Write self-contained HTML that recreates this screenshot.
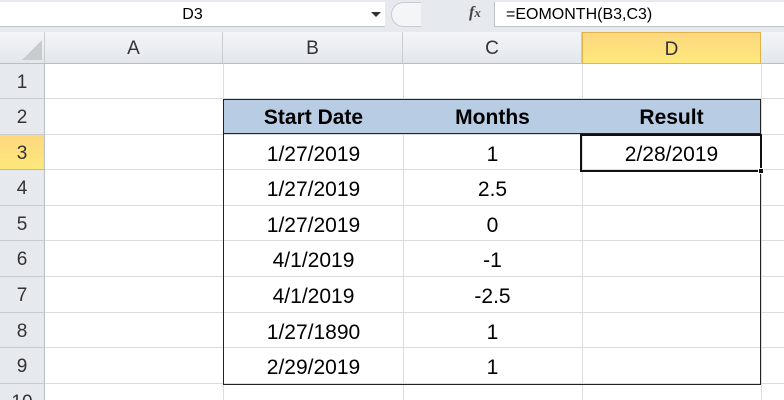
<!DOCTYPE html>
<html><head><style>
html,body{margin:0;width:784px;height:400px;overflow:hidden;background:#fff;font-family:"Liberation Sans",Arial,sans-serif;position:relative}
div{position:absolute;box-sizing:border-box}
.ch{top:32px;height:32px;background:linear-gradient(#f3f5f8,#e3e7ec);border-right:1px solid #c9cdd2;border-bottom:1px solid #b9bec5;font-size:19px;color:#333;text-align:center;line-height:34px}
.rh{left:0;width:45px;background:#e6e9ee;border-bottom:1px solid #c9cdd2;border-right:1px solid #b9bec5;font-size:19px;color:#333;text-align:center}
.hl{left:45px;width:739px;height:1px;background:#dadcdd}
.vl{top:64px;bottom:0;width:1px;background:#dadcdd}
.c{font-size:21px;color:#000;text-align:center}
</style></head><body>
<div style="left:0;top:0;width:784px;height:32px;background:#e6e9ee"></div>
<div style="left:0;top:2px;width:385px;height:25px;background:#fff;border-bottom:1px solid #c0c4c8;font-size:16px;text-align:center;line-height:26px">D3</div>
<div style="left:371px;top:12px;width:0;height:0;border-left:5px solid transparent;border-right:5px solid transparent;border-top:5px solid #333"></div>
<div style="left:391px;top:2px;width:30px;height:25px;border-radius:14px 0 0 14px;border:1px solid #c8ccd0;border-right:none;background:#f4f5f7"></div>
<div style="left:469px;top:4px;font:italic bold 16px 'Liberation Serif',serif;color:#444">f<span style="font-size:13px">x</span></div>
<div style="left:494px;top:2px;width:290px;height:25px;background:#fff;border-left:1px solid #c0c4c8;border-bottom:1px solid #c0c4c8;font-size:16px;line-height:26px;padding-left:11px">=EOMONTH(B3,C3)</div>
<div class="ch" style="left:0;width:45px"></div>
<div style="left:22px;top:40px;width:0;height:0;border-left:20px solid transparent;border-bottom:20px solid #c8cccf"></div>
<div class="ch" style="left:45px;width:178px">A</div>
<div class="ch" style="left:223px;width:180px">B</div>
<div class="ch" style="left:403px;width:179px">C</div>
<div class="ch" style="left:582px;width:179px;background:linear-gradient(#fdd77f,#fde87b);border:1px solid #e2b24c">D</div>
<div class="ch" style="left:761px;width:30px"></div>
<div class="vl" style="left:223px"></div><div class="vl" style="left:403px"></div><div class="vl" style="left:582px"></div><div class="vl" style="left:761px"></div>
<div class="rh" style="top:64px;height:35px;line-height:38px">1</div>
<div class="rh" style="top:99px;height:36px;line-height:38px">2</div>
<div class="rh" style="top:135px;height:35px;line-height:38px;background:linear-gradient(#fdd77f,#fde87b);border-bottom:1px solid #e2b24c">3</div>
<div class="rh" style="top:170px;height:36px;line-height:38px">4</div>
<div class="rh" style="top:206px;height:35px;line-height:38px">5</div>
<div class="rh" style="top:241px;height:36px;line-height:38px">6</div>
<div class="rh" style="top:277px;height:36px;line-height:38px">7</div>
<div class="rh" style="top:313px;height:35px;line-height:38px">8</div>
<div class="rh" style="top:348px;height:36px;line-height:38px">9</div>
<div class="rh" style="top:384px;height:36px;line-height:38px">10</div>
<div class="hl" style="top:98px"></div><div class="hl" style="top:134px"></div><div class="hl" style="top:169px"></div><div class="hl" style="top:205px"></div><div class="hl" style="top:240px"></div><div class="hl" style="top:276px"></div><div class="hl" style="top:312px"></div><div class="hl" style="top:347px"></div><div class="hl" style="top:383px"></div>
<div style="left:223px;top:99px;width:538px;height:286px;border:1.5px solid #222"></div>
<div style="left:224px;top:100px;width:536px;height:34px;background:#b8cce4;border-bottom:1px solid #222"></div>
<div class="c" style="left:224px;top:106px;width:179px;font-weight:bold">Start Date</div>
<div class="c" style="left:403px;top:106px;width:179px;font-weight:bold">Months</div>
<div class="c" style="left:582px;top:106px;width:179px;font-weight:bold">Result</div>
<div style="left:580px;top:134px;width:182px;height:38px;border:2.5px solid #111"></div>
<div style="left:758px;top:168px;width:6px;height:6px;background:#111;border:1px solid #fff"></div>
<div class="c" style="left:224px;top:143px;width:179px">1/27/2019</div><div class="c" style="left:403px;top:143px;width:179px">1</div><div class="c" style="left:582px;top:143px;width:179px">2/28/2019</div>
<div class="c" style="left:224px;top:178px;width:179px">1/27/2019</div><div class="c" style="left:403px;top:178px;width:179px">2.5</div>
<div class="c" style="left:224px;top:214px;width:179px">1/27/2019</div><div class="c" style="left:403px;top:214px;width:179px">0</div>
<div class="c" style="left:224px;top:249px;width:179px">4/1/2019</div><div class="c" style="left:403px;top:249px;width:179px">-1</div>
<div class="c" style="left:224px;top:285px;width:179px">4/1/2019</div><div class="c" style="left:403px;top:285px;width:179px">-2.5</div>
<div class="c" style="left:224px;top:321px;width:179px">1/27/1890</div><div class="c" style="left:403px;top:321px;width:179px">1</div>
<div class="c" style="left:224px;top:356px;width:179px">2/29/2019</div><div class="c" style="left:403px;top:356px;width:179px">1</div>
</body></html>
